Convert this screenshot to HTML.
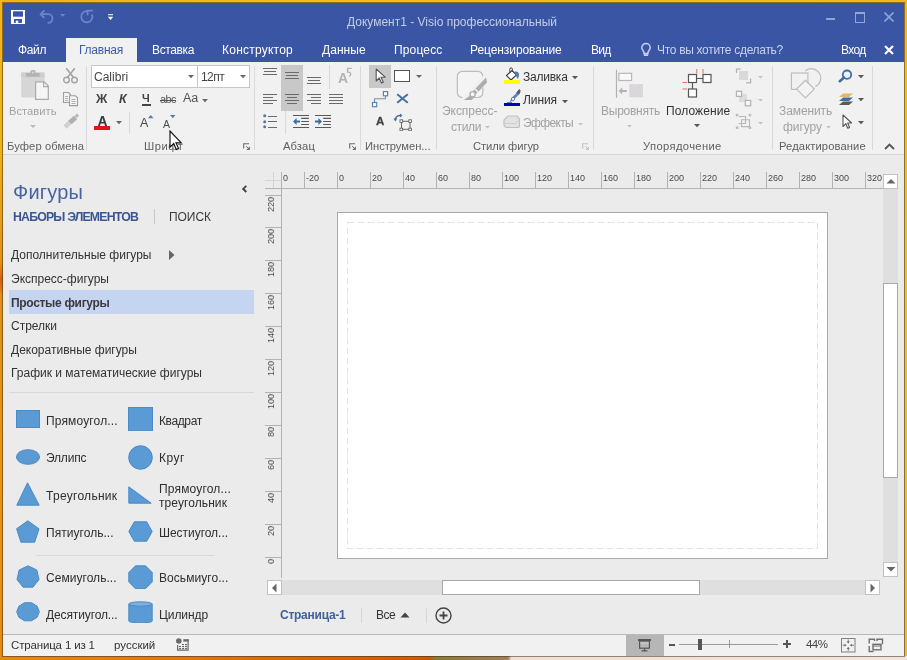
<!DOCTYPE html>
<html><head><meta charset="utf-8"><style>
html,body{margin:0;padding:0;width:907px;height:660px;overflow:hidden;background:#e9e9e9}
body{position:relative;font-family:"Liberation Sans",sans-serif}
svg{display:block}
.t{will-change:transform}
</style></head><body>
<div style="position:absolute;left:0;top:0;width:907px;height:660px;background:#eda52a"></div>
<div style="position:absolute;left:0;top:0;width:907px;height:3px;background:linear-gradient(90deg,#f3b020,#f5b818 30%,#f2bc1a 80%,#eeb820)"></div>
<div style="position:absolute;left:0;top:0;width:3px;height:656px;background:linear-gradient(180deg,#f4b420 0%,#f0b018 23%,#e39018 40%,#d86010 42.5%,#d86a12 43.5%,#e09018 45%,#e89412 70%,#e58c12 100%)"></div>
<div style="position:absolute;left:904px;top:0;width:3px;height:656px;background:linear-gradient(180deg,#f0b820,#e8c038 40%,#e6bc40 100%)"></div>
<div style="position:absolute;left:0;top:656px;width:907px;height:4px;background:linear-gradient(90deg,#e28a12 0%,#dc7810 22%,#d06808 36%,#c95e0a 46%,#c45a08 47.3%,#8c7a32 48%,#9a7c4c 52%,#a08058 56%,#f0dfd2 56.4%,#f1e3da 100%)"></div>
<div style="position:absolute;left:2px;top:2px;width:903px;height:655px;border:1px solid rgba(50,40,25,0.5);box-sizing:border-box"></div>
<div style="position:absolute;left:3px;top:3px;width:901px;height:59px;background:#3955a3;"></div>
<div style="position:absolute;left:3px;top:3px;width:901px;height:1px;background:#3d5590;"></div>
<div style="position:absolute;left:3px;top:62px;width:901px;height:92px;background:#f1f1f1;"></div>
<div style="position:absolute;left:3px;top:154px;width:901px;height:1px;background:#d6d6d6;"></div>
<div style="position:absolute;left:3px;top:155px;width:901px;height:479px;background:#ebebeb;"></div>
<div style="position:absolute;left:3px;top:634px;width:901px;height:1px;background:#b9b9b9;"></div>
<div style="position:absolute;left:3px;top:635px;width:901px;height:21px;background:#f1f1f1;"></div>
<div style="position:absolute;left:66px;top:38px;width:71px;height:24px;background:#f1f1f1;"></div>
<div style="position:absolute;left:154px;top:209px;width:1px;height:15px;background:#c8c8c8;"></div>
<div style="position:absolute;left:9px;top:290px;width:245px;height:24px;background:#c5d4f1;"></div>
<div style="position:absolute;left:9px;top:392px;width:245px;height:1px;background:#d8d8d8;"></div>
<div style="position:absolute;left:36px;top:555px;width:178px;height:1px;background:#d8d8d8;"></div>
<div style="position:absolute;left:337px;top:212px;width:491px;height:347px;background:#ffffff;border:1px solid #a9a9a9;box-sizing:border-box"></div>
<svg style="position:absolute;left:347px;top:222px;" width="471" height="327" viewBox="0 0 471 327"><rect x="0.5" y="0.5" width="470" height="326" fill="none" stroke="#e2e2e2" stroke-width="1" stroke-dasharray="7 3"/></svg>
<div style="position:absolute;left:626px;top:635px;width:38px;height:21px;background:#b6b6b6;"></div>
<svg style="position:absolute;left:11px;top:10px;" width="14" height="14" viewBox="0 0 14 14"><rect x="0" y="0" width="14" height="14" fill="#fff"/><rect x="2" y="1.3" width="10" height="5.4" fill="#3955a3"/><rect x="3" y="9" width="8" height="3.9" fill="#3955a3"/><rect x="4.8" y="10.6" width="2.4" height="2.3" fill="#fff"/></svg>
<svg style="position:absolute;left:38px;top:8px;" width="18" height="17" viewBox="0 0 18 17"><path d="M2.6 6.2H10.2A4.3 4.3 0 0 1 10.2 14.8H9.6" fill="none" stroke="#6d85c9" stroke-width="1.8"/><path d="M6.4 2.4L2.6 6.2 6.4 10" fill="none" stroke="#6d85c9" stroke-width="1.8"/></svg>
<svg style="position:absolute;left:60px;top:14px;" width="6" height="3" viewBox="0 0 6 3"><path d="M0 0h5.3l-2.65 2.8z" fill="#6d85c9"/></svg>
<svg style="position:absolute;left:79px;top:9px;" width="15" height="15" viewBox="0 0 15 15"><path d="M8.6 2.2A5.6 5.6 0 1 0 12.9 5.4" fill="none" stroke="#6d85c9" stroke-width="1.8"/><path d="M8.6 6.5V1.6h5.1" fill="none" stroke="#6d85c9" stroke-width="1.6"/></svg>
<svg style="position:absolute;left:107px;top:13px;" width="7" height="8" viewBox="0 0 7 8"><rect x="1" y="1.2" width="5" height="1" fill="#fff"/><path d="M0.8 3.8h5.4l-2.7 3.3z" fill="#fff"/></svg>
<div style="position:absolute;left:826px;top:18px;width:9px;height:1.6px;background:#8fa2d6;"></div>
<div style="position:absolute;left:855px;top:12px;width:8px;height:8px;border:1px solid #93a5d8;border-top-width:2px"></div>
<svg style="position:absolute;left:884px;top:12px;" width="10" height="10" viewBox="0 0 10 10"><path d="M0.5 0.5l9 9M9.5 0.5l-9 9" stroke="#8fa2d6" stroke-width="1.6"/></svg>
<svg style="position:absolute;left:640px;top:41.5px;" width="12" height="15" viewBox="0 0 12 15"><path d="M6 1.5a4.2 4.2 0 0 0-4.2 4.2c0 1.9 1.6 3.1 2.2 4.7v1.2h4V10.4c.6-1.6 2.2-2.8 2.2-4.7A4.2 4.2 0 0 0 6 1.5z" fill="none" stroke="#c8d1ee" stroke-width="1.5"/><rect x="3.8" y="12.2" width="4.4" height="1.8" fill="#c8d1ee"/></svg>
<svg style="position:absolute;left:884px;top:45px;" width="10" height="10" viewBox="0 0 10 10"><path d="M1 1l8 8M9 1l-8 8" stroke="#fff" stroke-width="2.2"/></svg>
<div style="position:absolute;left:86px;top:66px;width:1px;height:84px;background:#d9d9d9;"></div>
<div style="position:absolute;left:254px;top:66px;width:1px;height:84px;background:#d9d9d9;"></div>
<div style="position:absolute;left:360px;top:66px;width:1px;height:84px;background:#d9d9d9;"></div>
<div style="position:absolute;left:436px;top:66px;width:1px;height:84px;background:#d9d9d9;"></div>
<div style="position:absolute;left:593px;top:66px;width:1px;height:84px;background:#d9d9d9;"></div>
<div style="position:absolute;left:772px;top:66px;width:1px;height:84px;background:#d9d9d9;"></div>
<div style="position:absolute;left:872px;top:66px;width:1px;height:84px;background:#d9d9d9;"></div>
<div style="position:absolute;left:129px;top:112px;width:1px;height:22px;background:#d9d9d9;"></div>
<div style="position:absolute;left:329px;top:65px;width:1px;height:24px;background:#d9d9d9;"></div>
<div style="position:absolute;left:285px;top:110px;width:1px;height:24px;background:#d9d9d9;"></div>
<svg style="position:absolute;left:243px;top:143px;" width="8" height="8" viewBox="0 0 8 8"><path d="M0.7 5.6V0.7H6" fill="none" stroke="#6a6a6a" stroke-width="1.1"/><path d="M3.2 3.2l2.6 2.6" stroke="#6a6a6a" stroke-width="1"/><path d="M3.3 6.9H6.9V3.3Z" fill="#6a6a6a"/></svg>
<svg style="position:absolute;left:349px;top:143px;" width="8" height="8" viewBox="0 0 8 8"><path d="M0.7 5.6V0.7H6" fill="none" stroke="#6a6a6a" stroke-width="1.1"/><path d="M3.2 3.2l2.6 2.6" stroke="#6a6a6a" stroke-width="1"/><path d="M3.3 6.9H6.9V3.3Z" fill="#6a6a6a"/></svg>
<svg style="position:absolute;left:581.5px;top:143px;" width="8" height="8" viewBox="0 0 8 8"><path d="M0.7 5.6V0.7H6" fill="none" stroke="#c2c2c2" stroke-width="1.1"/><path d="M3.2 3.2l2.6 2.6" stroke="#c2c2c2" stroke-width="1"/><path d="M3.3 6.9H6.9V3.3Z" fill="#c2c2c2"/></svg>
<svg style="position:absolute;left:884px;top:143px;" width="11" height="7" viewBox="0 0 11 7"><path d="M1 6l4.5-4.5L10 6" fill="none" stroke="#555" stroke-width="1.8"/></svg>
<svg style="position:absolute;left:20px;top:68px;" width="30" height="33" viewBox="0 0 30 33"><rect x="1.2" y="4.5" width="23.3" height="25" fill="#d6d6d6"/><rect x="1.2" y="4.5" width="23.3" height="5" fill="#cfcfcf"/><rect x="6" y="5" width="13.6" height="3.7" fill="#b3b3b3"/><rect x="10.5" y="2" width="5" height="4" rx="1.5" fill="#b3b3b3"/><circle cx="13" cy="4.5" r="0.9" fill="#e0e0e0"/><path d="M15.6 13.8h8.5l4.2 4.2v13.4H15.6z" fill="#f5f5f5" stroke="#aaaaaa" stroke-width="1.2"/><path d="M23.6 13.8v4.8h4.7" fill="none" stroke="#aaaaaa" stroke-width="1.1"/></svg>
<svg style="position:absolute;left:30px;top:125px;" width="7" height="4" viewBox="0 0 7 4"><path d="M0 0h6l-3 3z" fill="#b8b8b8"/></svg>
<svg style="position:absolute;left:62px;top:67px;" width="17" height="18" viewBox="0 0 17 18"><circle cx="4.5" cy="13" r="2.8" fill="none" stroke="#a3a3a3" stroke-width="1.4"/><circle cx="12.5" cy="13" r="2.8" fill="none" stroke="#a3a3a3" stroke-width="1.4"/><path d="M5.6 10.3L12.8 1.2M11.4 10.3L4.2 1.2" stroke="#a3a3a3" stroke-width="1.6"/></svg>
<svg style="position:absolute;left:62px;top:91px;" width="17" height="16" viewBox="0 0 17 16"><path d="M1.5 1.5h5l2 2v8h-7z" fill="#f3f3f3" stroke="#9e9e9e" stroke-width="1.1"/><path d="M7.5 4.8h6l2 2v7.8h-8z" fill="#f3f3f3" stroke="#9e9e9e" stroke-width="1.1"/><path d="M3 5.5h3M3 7.5h3M3 9.5h3M9.5 8.5h4M9.5 10.5h4M9.5 12.5h4" stroke="#a8a8a8" stroke-width="0.9"/></svg>
<svg style="position:absolute;left:62px;top:113px;" width="18" height="16" viewBox="0 0 18 16"><path d="M3 14l6.5-6" stroke="#d0d0d0" stroke-width="4.5"/><path d="M8 9.5l5.5-5" stroke="#b0b0b0" stroke-width="5"/><path d="M13.5 4l2.5-2.3" stroke="#b8b8b8" stroke-width="3"/></svg>
<div style="position:absolute;left:91px;top:65px;border:1px solid #c6c6c6;background:#fff;box-sizing:border-box;width:108px;height:23px"></div>
<div style="position:absolute;left:197px;top:65px;width:53px;height:23px;border:1px solid #c6c6c6;background:#fff;box-sizing:border-box"></div>
<svg style="position:absolute;left:187.8px;top:75px;" width="7" height="4" viewBox="0 0 7 4"><path d="M0 0h6l-3 3.2z" fill="#666"/></svg>
<svg style="position:absolute;left:239.8px;top:75px;" width="7" height="4" viewBox="0 0 7 4"><path d="M0 0h6l-3 3.2z" fill="#666"/></svg>
<div style="position:absolute;left:141.5px;top:104px;width:9px;height:1.5px;background:#444;"></div>
<div style="position:absolute;left:159.5px;top:99.5px;width:16.5px;height:1.2px;background:#555;"></div>
<svg style="position:absolute;left:201.5px;top:98.5px;" width="7" height="4" viewBox="0 0 7 4"><path d="M0 0h6l-3 3.2z" fill="#666"/></svg>
<svg style="position:absolute;left:97px;top:115px;" width="11" height="12" viewBox="0 0 11 12"><path fill-rule="evenodd" d="M0.9 11L4.3 0.9h2.4L10.1 11H8.1L7.3 8.6H3.7L2.9 11zM4.3 6.9h2.4L5.5 3.1z" fill="#3c3c3c"/></svg>
<div style="position:absolute;left:94px;top:126px;width:16px;height:3.8px;background:#e8101a;"></div>
<svg style="position:absolute;left:115.5px;top:121px;" width="7" height="4" viewBox="0 0 7 4"><path d="M0 0h6l-3 3.2z" fill="#666"/></svg>
<svg style="position:absolute;left:148px;top:114.5px;" width="6" height="4" viewBox="0 0 6 4"><path d="M0 3.2h5.5L2.75 0z" fill="#4f7eb8"/></svg>
<svg style="position:absolute;left:170.3px;top:114.8px;" width="6" height="4" viewBox="0 0 6 4"><path d="M0 0h5.5l-2.75 3.2z" fill="#4f7eb8"/></svg>
<div style="position:absolute;left:281px;top:65px;width:22px;height:46px;background:#c8c8c8;"></div>
<div style="position:absolute;left:263px;top:67.5px;width:14px;height:1.3px;background:#6a6a6a;"></div>
<div style="position:absolute;left:264px;top:70.5px;width:12px;height:1.3px;background:#6a6a6a;"></div>
<div style="position:absolute;left:263px;top:73.5px;width:14px;height:1.3px;background:#6a6a6a;"></div>
<div style="position:absolute;left:285px;top:71.5px;width:14px;height:1.3px;background:#6a6a6a;"></div>
<div style="position:absolute;left:286px;top:74.5px;width:12px;height:1.3px;background:#6a6a6a;"></div>
<div style="position:absolute;left:285px;top:77.5px;width:14px;height:1.3px;background:#6a6a6a;"></div>
<div style="position:absolute;left:307px;top:76.5px;width:14px;height:1.3px;background:#6a6a6a;"></div>
<div style="position:absolute;left:308px;top:79.5px;width:12px;height:1.3px;background:#6a6a6a;"></div>
<div style="position:absolute;left:307px;top:82.5px;width:14px;height:1.3px;background:#6a6a6a;"></div>
<svg style="position:absolute;left:344px;top:66px;" width="10" height="12" viewBox="0 0 10 12"><path d="M7.8 2.3H3.6V6.2C6.8 5.8 8 8.3 5.2 10.6" fill="none" stroke="#b3b3b3" stroke-width="1.3"/></svg>
<div style="position:absolute;left:263px;top:94px;width:14px;height:1.3px;background:#6a6a6a;"></div>
<div style="position:absolute;left:263px;top:97px;width:10px;height:1.3px;background:#6a6a6a;"></div>
<div style="position:absolute;left:263px;top:100px;width:14px;height:1.3px;background:#6a6a6a;"></div>
<div style="position:absolute;left:263px;top:103px;width:10px;height:1.3px;background:#6a6a6a;"></div>
<div style="position:absolute;left:285px;top:94px;width:14px;height:1.3px;background:#6a6a6a;"></div>
<div style="position:absolute;left:287px;top:97px;width:10px;height:1.3px;background:#6a6a6a;"></div>
<div style="position:absolute;left:285px;top:100px;width:14px;height:1.3px;background:#6a6a6a;"></div>
<div style="position:absolute;left:287px;top:103px;width:10px;height:1.3px;background:#6a6a6a;"></div>
<div style="position:absolute;left:307px;top:94px;width:14px;height:1.3px;background:#6a6a6a;"></div>
<div style="position:absolute;left:311px;top:97px;width:10px;height:1.3px;background:#6a6a6a;"></div>
<div style="position:absolute;left:307px;top:100px;width:14px;height:1.3px;background:#6a6a6a;"></div>
<div style="position:absolute;left:311px;top:103px;width:10px;height:1.3px;background:#6a6a6a;"></div>
<div style="position:absolute;left:329px;top:94px;width:14px;height:1.3px;background:#6a6a6a;"></div>
<div style="position:absolute;left:329px;top:97px;width:14px;height:1.3px;background:#6a6a6a;"></div>
<div style="position:absolute;left:329px;top:100px;width:14px;height:1.3px;background:#6a6a6a;"></div>
<div style="position:absolute;left:329px;top:103px;width:14px;height:1.3px;background:#6a6a6a;"></div>
<svg style="position:absolute;left:263px;top:114.3px;" width="4" height="4" viewBox="0 0 4 4"><circle cx="1.7" cy="1.7" r="1.5" fill="#5176a8"/></svg>
<div style="position:absolute;left:268px;top:115.5px;width:9px;height:1.3px;background:#6a6a6a;"></div>
<svg style="position:absolute;left:263px;top:119.8px;" width="4" height="4" viewBox="0 0 4 4"><circle cx="1.7" cy="1.7" r="1.5" fill="#5176a8"/></svg>
<div style="position:absolute;left:268px;top:121px;width:9px;height:1.3px;background:#6a6a6a;"></div>
<svg style="position:absolute;left:263px;top:125.3px;" width="4" height="4" viewBox="0 0 4 4"><circle cx="1.7" cy="1.7" r="1.5" fill="#5176a8"/></svg>
<div style="position:absolute;left:268px;top:126.5px;width:9px;height:1.3px;background:#6a6a6a;"></div>
<svg style="position:absolute;left:292px;top:113px;" width="18" height="16" viewBox="0 0 18 16"><path d="M1 2.5h16M9.2 5.4h7.7M9.2 8.5h7.7M9.2 11.5h7.7M1 14.5h16" stroke="#585858" stroke-width="1.1"/><path d="M1 8.5L4.6 5.1V7.4H8V9.6H4.6V11.9Z" fill="#3f6e9c"/></svg>
<svg style="position:absolute;left:314px;top:113px;" width="18" height="16" viewBox="0 0 18 16"><path d="M1 2.5h16M9.2 5.4h7.7M9.2 8.5h7.7M9.2 11.5h7.7M1 14.5h16" stroke="#585858" stroke-width="1.1"/><path d="M8 8.5L4.4 5.1V7.4H1V9.6H4.4V11.9Z" fill="#3f6e9c"/></svg>
<div style="position:absolute;left:369px;top:65px;width:22px;height:23px;background:#c8c8c8;"></div>
<svg style="position:absolute;left:375px;top:68px;" width="11" height="16" viewBox="0 0 11 16"><path d="M1.2 1v12l3-3 2.3 5 1.8-.8-2.3-5h4.2z" fill="#fff" stroke="#555" stroke-width="1.1" stroke-linejoin="round"/></svg>
<div style="position:absolute;left:394px;top:70px;width:16px;height:12px;border:1.3px solid #555;box-sizing:border-box;background:#fff"></div>
<svg style="position:absolute;left:415.5px;top:75px;" width="7" height="4" viewBox="0 0 7 4"><path d="M0 0h6l-3 3z" fill="#666"/></svg>
<svg style="position:absolute;left:371px;top:90px;" width="18" height="18" viewBox="0 0 18 18"><path d="M3.5 12.5V8.8H14.5V5.6" fill="none" stroke="#7d8fa6" stroke-width="1.1"/><rect x="1.5" y="12.5" width="4.2" height="4.2" fill="#fff" stroke="#5b84b4" stroke-width="1.2"/><rect x="12.4" y="1.6" width="4.2" height="4.2" fill="#fff" stroke="#5b84b4" stroke-width="1.2"/></svg>
<svg style="position:absolute;left:396px;top:93px;" width="13" height="11" viewBox="0 0 13 11"><path d="M1.2 1.2l10.6 8.6M11.8 1.2L1.2 9.8" stroke="#4570a0" stroke-width="2"/></svg>
<svg style="position:absolute;left:393px;top:113px;" width="19" height="18" viewBox="0 0 19 18"><rect x="8.5" y="8.3" width="8.5" height="8" fill="none" stroke="#666" stroke-width="1"/><g fill="#fff" stroke="#666" stroke-width="0.9"><rect x="7" y="6.8" width="2.6" height="2.6"/><rect x="15.8" y="6.8" width="2.6" height="2.6"/><rect x="7" y="15.2" width="2.6" height="2.6"/><rect x="15.8" y="15.2" width="2.6" height="2.6"/></g><path d="M2.3 6.5C2.8 3.8 5 2.4 7.8 2.6" fill="none" stroke="#4570a0" stroke-width="1.4"/><path d="M7 0.6L9.6 2.6 7 4.6zM0.4 5.6L2.3 8.6 4.3 5.6z" fill="#4570a0"/></svg>
<svg style="position:absolute;left:455px;top:69px;" width="34" height="33" viewBox="0 0 34 33"><rect x="2.3" y="2.3" width="25.5" height="26.2" rx="5" fill="#f4f4f4" stroke="#bcbcbc" stroke-width="1.2"/><path d="M31.5 9L10 31" stroke="#f1f1f1" stroke-width="8"/><path d="M31 8.5L32 13.5 23.5 22.5 20.5 19.5Z" fill="#adadad"/><path d="M19.5 20.5L22.5 23.5 20.5 25.5 17.5 22.5Z" fill="#adadad"/><circle cx="17.6" cy="25.2" r="2.6" fill="#f6f6f6" stroke="#adadad" stroke-width="1.3"/><path d="M14.8 26.8L19.6 28.6 16.5 31 8.8 31Z" fill="#adadad"/></svg>
<svg style="position:absolute;left:485px;top:126px;" width="6" height="4" viewBox="0 0 6 4"><path d="M0 0h5l-2.5 2.6z" fill="#c2c2c2"/></svg>
<svg style="position:absolute;left:503px;top:66px;" width="18" height="15" viewBox="0 0 18 15"><path d="M3.5 9.5L9 4.5 13.5 9 8 14Z" fill="#fff" stroke="#3a3a3a" stroke-width="1.1"/><path d="M6.8 6.5V3.2A1.3 1.3 0 0 1 9.4 3.2V6" fill="none" stroke="#3a3a3a" stroke-width="0.9"/><path d="M11.5 5.5C14 5 16 6 16 8.5 16 10.5 15.2 12 14.5 13 13.8 11.5 13.2 10 12.5 8.8Z" fill="#4f7eb0"/></svg>
<div style="position:absolute;left:503.6px;top:80px;width:16px;height:3.5px;background:#ffff00;"></div>
<svg style="position:absolute;left:571.5px;top:75.5px;" width="7" height="4" viewBox="0 0 7 4"><path d="M0 0h6l-3 3.2z" fill="#555"/></svg>
<svg style="position:absolute;left:503px;top:88px;" width="18" height="15" viewBox="0 0 18 15"><path d="M6.5 14.5L8.5 10 14.5 4 16.5 6 10.5 12Z" fill="#5a86c0"/><path d="M14 4.5L16.5 1.5 17.5 3.8 16.5 6Z" fill="#606060"/><path d="M13 5L16.2 1 17.6 2.5 16 6.2" fill="#5e5e5e"/><circle cx="10" cy="11" r="1.6" fill="#fff" stroke="#3f6e9c" stroke-width="0.8"/><path d="M4 14.5H9" stroke="#5a86c0" stroke-width="1"/></svg>
<div style="position:absolute;left:503.6px;top:102.7px;width:16px;height:3.6px;background:#0000c8;"></div>
<svg style="position:absolute;left:561.5px;top:99.5px;" width="7" height="4" viewBox="0 0 7 4"><path d="M0 0h6l-3 3.2z" fill="#555"/></svg>
<svg style="position:absolute;left:503px;top:115px;" width="17" height="13" viewBox="0 0 17 13"><path d="M5 1h9l2.5 3v6.5a2 2 0 0 1-2 2H4a3 3 0 0 1-3-3V5z" fill="#e3e3e3" stroke="#c0c0c0" stroke-width="1.2"/><path d="M1.5 8.5h11l3-3" fill="none" stroke="#cfcfcf"/></svg>
<svg style="position:absolute;left:577.5px;top:122.5px;" width="6" height="4" viewBox="0 0 6 4"><path d="M0 0h5l-2.5 2.6z" fill="#c2c2c2"/></svg>
<svg style="position:absolute;left:614px;top:68px;" width="32" height="32" viewBox="0 0 32 32"><path d="M2.5 1.7v28.2" stroke="#b2b2b2" stroke-width="1.2"/><rect x="4.8" y="5.3" width="12.8" height="7.2" fill="#f8f8f8" stroke="#b8b8b8" stroke-width="1.2"/><rect x="15.3" y="16.1" width="13.6" height="13.2" fill="#d9d7d9"/><path d="M4.6 23L8.2 19.6V22H12.8V24H8.2V26.4Z" fill="#b4b4b4"/></svg>
<svg style="position:absolute;left:627px;top:125px;" width="6" height="4" viewBox="0 0 6 4"><path d="M0 0h5l-2.5 2.6z" fill="#c2c2c2"/></svg>
<svg style="position:absolute;left:681px;top:68px;" width="33" height="31" viewBox="0 0 33 31"><g fill="#fff" stroke="#555" stroke-width="1.2"><rect x="7.5" y="6.5" width="8" height="8"/><rect x="22" y="6.5" width="8" height="8"/><rect x="7.5" y="21" width="8" height="8"/></g><path d="M15.5 10.5h6.5M11.5 14.5V21" stroke="#555" stroke-width="1.2"/><path d="M15.8 1v4.5M22 1v4.5M1.5 14.5h4.5M1.5 21h4.5" stroke="#e07060" stroke-width="1"/></svg>
<svg style="position:absolute;left:694px;top:124px;" width="7" height="4" viewBox="0 0 7 4"><path d="M0 0h6l-3 3.2z" fill="#555"/></svg>
<svg style="position:absolute;left:735px;top:68px;" width="17" height="16" viewBox="0 0 17 16"><rect x="4" y="3" width="9" height="9" fill="#d9d9d9"/><path d="M1.5 5V1.2H5.5M15.6 10.5v4.3h-4.5" fill="none" stroke="#b2b2b2" stroke-width="1.2"/></svg>
<svg style="position:absolute;left:735px;top:90px;" width="17" height="17" viewBox="0 0 17 17"><rect x="4" y="4" width="8" height="8" fill="#dcdcdc"/><rect x="1.4" y="1.2" width="5.2" height="5.2" fill="#f6f6f6" stroke="#b2b2b2" stroke-width="1.2"/><rect x="10.3" y="10.4" width="5.4" height="5.4" fill="#f6f6f6" stroke="#b2b2b2" stroke-width="1.2"/></svg>
<svg style="position:absolute;left:735px;top:113px;" width="17" height="17" viewBox="0 0 17 17"><g fill="#bdbdbd"><rect x="0.8" y="0.8" width="2.6" height="2.6"/><rect x="13.6" y="0.8" width="2.6" height="2.6"/><rect x="0.8" y="13.4" width="2.6" height="2.6"/><rect x="13.6" y="13.4" width="2.6" height="2.6"/></g><path d="M4 3.5h6.5v7H3.6M6.5 6.8h8v6.8H6.5z" fill="none" stroke="#b8b8b8" stroke-width="1.1"/></svg>
<svg style="position:absolute;left:758px;top:75.5px;" width="6" height="4" viewBox="0 0 6 4"><path d="M0 0h5l-2.5 2.6z" fill="#c2c2c2"/></svg>
<svg style="position:absolute;left:758px;top:98.5px;" width="6" height="4" viewBox="0 0 6 4"><path d="M0 0h5l-2.5 2.6z" fill="#c2c2c2"/></svg>
<svg style="position:absolute;left:758px;top:121.5px;" width="6" height="4" viewBox="0 0 6 4"><path d="M0 0h5l-2.5 2.6z" fill="#c2c2c2"/></svg>
<svg style="position:absolute;left:790px;top:68px;" width="32" height="32" viewBox="0 0 32 32"><rect x="1.4" y="5" width="16.5" height="16.4" fill="none" stroke="#bdbdbd" stroke-width="1.2"/><path d="M15.2 3A9.4 9.4 0 1 1 25.4 18.6" fill="none" stroke="#bdbdbd" stroke-width="1.2"/><path d="M15.4 12.3L24.3 21.1 15.4 30 6.6 21.1Z" fill="#f3f3f3" stroke="#bdbdbd" stroke-width="1.2"/></svg>
<svg style="position:absolute;left:826px;top:126px;" width="6" height="4" viewBox="0 0 6 4"><path d="M0 0h5l-2.5 2.6z" fill="#c2c2c2"/></svg>
<svg style="position:absolute;left:838px;top:69px;" width="16" height="14" viewBox="0 0 16 14"><circle cx="9" cy="5.7" r="4.2" fill="#eaf1f8" stroke="#3f6e9c" stroke-width="1.8"/><path d="M1.8 12.2l4.2-3.6" stroke="#3f6e9c" stroke-width="2.6" stroke-linecap="round"/></svg>
<svg style="position:absolute;left:838px;top:92px;" width="16" height="15" viewBox="0 0 16 15"><path d="M1 5l4-3.5h10l-4 3.5z" fill="#e6b46a"/><path d="M1 9l4-3.5h10l-4 3.5z" fill="#41709e"/><path d="M1 13l4-3.5h10l-4 3.5z" fill="#5a5a5a"/></svg>
<svg style="position:absolute;left:842px;top:114px;" width="10" height="15" viewBox="0 0 10 15"><path d="M1 1v11.5l2.8-2.8 2 4.5 1.8-.8-2-4.4h4z" fill="#fff" stroke="#555" stroke-width="1.1" stroke-linejoin="round"/></svg>
<svg style="position:absolute;left:858px;top:75px;" width="7" height="4" viewBox="0 0 7 4"><path d="M0 0h6l-3 3.2z" fill="#555"/></svg>
<svg style="position:absolute;left:858px;top:98px;" width="7" height="4" viewBox="0 0 7 4"><path d="M0 0h6l-3 3.2z" fill="#555"/></svg>
<svg style="position:absolute;left:858px;top:121px;" width="7" height="4" viewBox="0 0 7 4"><path d="M0 0h6l-3 3.2z" fill="#555"/></svg>
<svg style="position:absolute;left:241px;top:184px;" width="7" height="9" viewBox="0 0 7 9"><path d="M5.3 1.8L2.2 4.9 5.3 8" fill="none" stroke="#444" stroke-width="1.9"/></svg>
<svg style="position:absolute;left:169px;top:249.6px;" width="6" height="10" viewBox="0 0 6 10"><path d="M0 0v10l5.5-5z" fill="#666"/></svg>
<svg style="position:absolute;left:16px;top:410px;" width="24" height="18" viewBox="0 0 24 18"><rect x="0.5" y="0.5" width="23" height="17" fill="#5b9bd5" stroke="#4a8ac6"/></svg>
<svg style="position:absolute;left:128px;top:407px;" width="25" height="24" viewBox="0 0 25 24"><rect x="0.5" y="0.5" width="24" height="23.5" fill="#5b9bd5" stroke="#4a8ac6"/></svg>
<svg style="position:absolute;left:16px;top:449px;" width="24" height="16" viewBox="0 0 24 16"><ellipse cx="12" cy="8" rx="11.5" ry="7.3" fill="#5b9bd5" stroke="#4a8ac6"/></svg>
<svg style="position:absolute;left:128px;top:445px;" width="25" height="25" viewBox="0 0 25 25"><circle cx="12.5" cy="12.5" r="11.8" fill="#5b9bd5" stroke="#4a8ac6"/></svg>
<svg style="position:absolute;left:16px;top:482px;" width="24" height="24" viewBox="0 0 24 24"><path d="M11.5 0.8L23.2 23.2H0.8z" fill="#5b9bd5" stroke="#4a8ac6"/></svg>
<svg style="position:absolute;left:128px;top:486px;" width="24" height="18" viewBox="0 0 24 18"><path d="M0.8 0.8L23.2 17.2H0.8z" fill="#5b9bd5" stroke="#4a8ac6"/></svg>
<svg style="position:absolute;left:16px;top:520px;" width="24" height="23" viewBox="0 0 24 23"><path d="M11.8 0.8L23 8.8l-4.3 13.4H4.9L0.6 8.8z" fill="#5b9bd5" stroke="#4a8ac6"/></svg>
<svg style="position:absolute;left:128px;top:521px;" width="25" height="21" viewBox="0 0 25 21"><path d="M6.3 0.8h12.4L24.2 10.5l-5.5 9.7H6.3L0.8 10.5z" fill="#5b9bd5" stroke="#4a8ac6"/></svg>
<svg style="position:absolute;left:16px;top:565px;" width="24" height="24" viewBox="0 0 24 24"><path d="M12 0.8l8.8 4.2 2.2 9.5-6.1 7.7H7.1L1 14.5l2.2-9.5z" fill="#5b9bd5" stroke="#4a8ac6"/></svg>
<svg style="position:absolute;left:128px;top:565px;" width="25" height="24" viewBox="0 0 25 24"><path d="M7.5 0.8h10l6.7 6.7v9.5l-6.7 6.7h-10L0.8 17V7.5z" fill="#5b9bd5" stroke="#4a8ac6"/></svg>
<svg style="position:absolute;left:16px;top:602px;" width="24" height="20" viewBox="0 0 24 20"><path d="M23.30,9.75 L21.14,15.33 L15.49,18.79 L8.51,18.79 L2.86,15.33 L0.70,9.75 L2.86,4.17 L8.51,0.71 L15.49,0.71 L21.14,4.17z" fill="#5b9bd5" stroke="#4a8ac6"/></svg>
<svg style="position:absolute;left:128px;top:601px;" width="25" height="22" viewBox="0 0 25 22"><path d="M0.8 3v17c0 1.2 5.3 1.8 11.7 1.8s11.7-.6 11.7-1.8V3" fill="#5b9bd5" stroke="#4a8ac6"/><ellipse cx="12.5" cy="3" rx="11.7" ry="2.2" fill="#7fb0de" stroke="#4a8ac6"/></svg>
<div style="position:absolute;left:265px;top:188px;width:618px;height:1px;background:#b2b2b2;"></div>
<div style="position:absolute;left:281px;top:172px;width:1px;height:406px;background:#b2b2b2;"></div>
<div style="position:absolute;left:265px;top:180px;width:16px;height:1px;background:#d4d4d4;"></div>
<div style="position:absolute;left:273px;top:172px;width:1px;height:16px;background:#d4d4d4;"></div>
<div style="position:absolute;left:304px;top:172px;width:1px;height:16px;background:#b2b2b2;"></div>
<div style="position:absolute;left:337px;top:172px;width:1px;height:16px;background:#b2b2b2;"></div>
<div style="position:absolute;left:370px;top:172px;width:1px;height:16px;background:#b2b2b2;"></div>
<div style="position:absolute;left:403px;top:172px;width:1px;height:16px;background:#b2b2b2;"></div>
<div style="position:absolute;left:436px;top:172px;width:1px;height:16px;background:#b2b2b2;"></div>
<div style="position:absolute;left:469px;top:172px;width:1px;height:16px;background:#b2b2b2;"></div>
<div style="position:absolute;left:502px;top:172px;width:1px;height:16px;background:#b2b2b2;"></div>
<div style="position:absolute;left:535px;top:172px;width:1px;height:16px;background:#b2b2b2;"></div>
<div style="position:absolute;left:568px;top:172px;width:1px;height:16px;background:#b2b2b2;"></div>
<div style="position:absolute;left:601px;top:172px;width:1px;height:16px;background:#b2b2b2;"></div>
<div style="position:absolute;left:634px;top:172px;width:1px;height:16px;background:#b2b2b2;"></div>
<div style="position:absolute;left:667px;top:172px;width:1px;height:16px;background:#b2b2b2;"></div>
<div style="position:absolute;left:700px;top:172px;width:1px;height:16px;background:#b2b2b2;"></div>
<div style="position:absolute;left:733px;top:172px;width:1px;height:16px;background:#b2b2b2;"></div>
<div style="position:absolute;left:766px;top:172px;width:1px;height:16px;background:#b2b2b2;"></div>
<div style="position:absolute;left:799px;top:172px;width:1px;height:16px;background:#b2b2b2;"></div>
<div style="position:absolute;left:832px;top:172px;width:1px;height:16px;background:#b2b2b2;"></div>
<div style="position:absolute;left:865px;top:172px;width:1px;height:16px;background:#b2b2b2;"></div>
<div style="position:absolute;left:265px;top:195px;width:16px;height:1px;background:#b2b2b2;"></div>
<div class="t" style="position:absolute;left:266.8px;top:197px;height:16px;font-size:9px;line-height:9px;color:#4a4a4a;writing-mode:vertical-rl;transform:rotate(180deg);white-space:pre;text-align:right">220</div>
<div style="position:absolute;left:265px;top:227px;width:16px;height:1px;background:#b2b2b2;"></div>
<div class="t" style="position:absolute;left:266.8px;top:229px;height:16px;font-size:9px;line-height:9px;color:#4a4a4a;writing-mode:vertical-rl;transform:rotate(180deg);white-space:pre;text-align:right">200</div>
<div style="position:absolute;left:265px;top:260px;width:16px;height:1px;background:#b2b2b2;"></div>
<div class="t" style="position:absolute;left:266.8px;top:262px;height:16px;font-size:9px;line-height:9px;color:#4a4a4a;writing-mode:vertical-rl;transform:rotate(180deg);white-space:pre;text-align:right">180</div>
<div style="position:absolute;left:265px;top:293px;width:16px;height:1px;background:#b2b2b2;"></div>
<div class="t" style="position:absolute;left:266.8px;top:295px;height:16px;font-size:9px;line-height:9px;color:#4a4a4a;writing-mode:vertical-rl;transform:rotate(180deg);white-space:pre;text-align:right">160</div>
<div style="position:absolute;left:265px;top:326px;width:16px;height:1px;background:#b2b2b2;"></div>
<div class="t" style="position:absolute;left:266.8px;top:328px;height:16px;font-size:9px;line-height:9px;color:#4a4a4a;writing-mode:vertical-rl;transform:rotate(180deg);white-space:pre;text-align:right">140</div>
<div style="position:absolute;left:265px;top:359px;width:16px;height:1px;background:#b2b2b2;"></div>
<div class="t" style="position:absolute;left:266.8px;top:361px;height:16px;font-size:9px;line-height:9px;color:#4a4a4a;writing-mode:vertical-rl;transform:rotate(180deg);white-space:pre;text-align:right">120</div>
<div style="position:absolute;left:265px;top:392px;width:16px;height:1px;background:#b2b2b2;"></div>
<div class="t" style="position:absolute;left:266.8px;top:394px;height:16px;font-size:9px;line-height:9px;color:#4a4a4a;writing-mode:vertical-rl;transform:rotate(180deg);white-space:pre;text-align:right">100</div>
<div style="position:absolute;left:265px;top:425px;width:16px;height:1px;background:#b2b2b2;"></div>
<div class="t" style="position:absolute;left:266.8px;top:427px;height:16px;font-size:9px;line-height:9px;color:#4a4a4a;writing-mode:vertical-rl;transform:rotate(180deg);white-space:pre;text-align:right">80</div>
<div style="position:absolute;left:265px;top:458px;width:16px;height:1px;background:#b2b2b2;"></div>
<div class="t" style="position:absolute;left:266.8px;top:460px;height:16px;font-size:9px;line-height:9px;color:#4a4a4a;writing-mode:vertical-rl;transform:rotate(180deg);white-space:pre;text-align:right">60</div>
<div style="position:absolute;left:265px;top:491px;width:16px;height:1px;background:#b2b2b2;"></div>
<div class="t" style="position:absolute;left:266.8px;top:493px;height:16px;font-size:9px;line-height:9px;color:#4a4a4a;writing-mode:vertical-rl;transform:rotate(180deg);white-space:pre;text-align:right">40</div>
<div style="position:absolute;left:265px;top:524px;width:16px;height:1px;background:#b2b2b2;"></div>
<div class="t" style="position:absolute;left:266.8px;top:526px;height:16px;font-size:9px;line-height:9px;color:#4a4a4a;writing-mode:vertical-rl;transform:rotate(180deg);white-space:pre;text-align:right">20</div>
<div style="position:absolute;left:265px;top:557px;width:16px;height:1px;background:#b2b2b2;"></div>
<div class="t" style="position:absolute;left:266.8px;top:559px;height:16px;font-size:9px;line-height:9px;color:#4a4a4a;writing-mode:vertical-rl;transform:rotate(180deg);white-space:pre;text-align:right">0</div>
<div style="position:absolute;left:883px;top:175px;width:15px;height:402px;background:#dfdfdf;"></div>
<div style="position:absolute;left:883px;top:174px;width:15px;height:15px;background:#fff;border:1px solid #c2c2c2;box-sizing:border-box"></div>
<svg style="position:absolute;left:885.5px;top:178px;" width="10" height="7" viewBox="0 0 10 7"><path d="M0.5 5.5L5 1l4.5 4.5z" fill="#666"/></svg>
<div style="position:absolute;left:883px;top:283px;width:15px;height:195px;background:#fff;border:1px solid #a9a9a9;box-sizing:border-box"></div>
<div style="position:absolute;left:883px;top:562px;width:15px;height:15px;background:#fff;border:1px solid #c2c2c2;box-sizing:border-box"></div>
<svg style="position:absolute;left:885.5px;top:566px;" width="10" height="7" viewBox="0 0 10 7"><path d="M0.5 1L5 5.5 9.5 1z" fill="#666"/></svg>
<div style="position:absolute;left:267px;top:580px;width:613px;height:15px;background:#dfdfdf;"></div>
<div style="position:absolute;left:267px;top:580px;width:15px;height:15px;background:#fff;border:1px solid #c2c2c2;box-sizing:border-box"></div>
<svg style="position:absolute;left:271px;top:583px;" width="7" height="10" viewBox="0 0 7 10"><path d="M5.5 0.5L1 5l4.5 4.5z" fill="#666"/></svg>
<div style="position:absolute;left:442px;top:580px;width:258px;height:15px;background:#fff;border:1px solid #a9a9a9;box-sizing:border-box"></div>
<div style="position:absolute;left:865px;top:580px;width:15px;height:15px;background:#fff;border:1px solid #c2c2c2;box-sizing:border-box"></div>
<svg style="position:absolute;left:869px;top:583px;" width="7" height="10" viewBox="0 0 7 10"><path d="M1.5 0.5L6 5 1.5 9.5z" fill="#666"/></svg>
<div style="position:absolute;left:361px;top:608px;width:1px;height:15px;background:#d6d6d6;"></div>
<svg style="position:absolute;left:400px;top:612px;" width="10" height="6" viewBox="0 0 10 6"><path d="M0.5 5.5L5 0.5l4.5 5z" fill="#444"/></svg>
<div style="position:absolute;left:426px;top:608px;width:1px;height:15px;background:#d6d6d6;"></div>
<svg style="position:absolute;left:435px;top:607px;" width="18" height="17" viewBox="0 0 18 17"><circle cx="8.5" cy="8.5" r="7.5" fill="none" stroke="#444" stroke-width="1.4"/><path d="M8.5 4.5v8M4.5 8.5h8" stroke="#444" stroke-width="1.8"/></svg>
<svg style="position:absolute;left:170px;top:634px;" width="22" height="20" viewBox="0 0 22 20"><circle cx="8.8" cy="7" r="2.8" fill="#6a6a6a"/><rect x="13.3" y="5.2" width="5.4" height="2.4" fill="#6a6a6a"/><path d="M7.6 11V16.1H18.1V5.2" fill="none" stroke="#6a6a6a" stroke-width="1.2"/><g fill="#6a6a6a"><rect x="12" y="10" width="2" height="1.1"/><rect x="15" y="10" width="2" height="1.1"/><rect x="9" y="12" width="2" height="1.1"/><rect x="12" y="12" width="2" height="1.1"/><rect x="15" y="12" width="2" height="1.1"/><rect x="9" y="14" width="2" height="1.1"/><rect x="12" y="14" width="2" height="1.1"/><rect x="15" y="14" width="2" height="1.1"/></g></svg>
<svg style="position:absolute;left:637px;top:638px;" width="15" height="14" viewBox="0 0 15 14"><rect x="1" y="1" width="13" height="2" fill="#555"/><rect x="2.6" y="3" width="9.8" height="7.2" fill="none" stroke="#555" stroke-width="1.2"/><rect x="3.5" y="4.6" width="8" height="1" fill="#d0d0d0"/><path d="M7.5 10.2v2.3M4.5 12.8h6" stroke="#555" stroke-width="1.2"/></svg>
<div style="position:absolute;left:669px;top:644px;width:6px;height:2px;background:#555;"></div>
<div style="position:absolute;left:679px;top:644.3px;width:99px;height:1px;background:#9a9a9a;"></div>
<div style="position:absolute;left:729px;top:640px;width:1px;height:8px;background:#9a9a9a;"></div>
<div style="position:absolute;left:698px;top:639px;width:4px;height:11px;background:#555;"></div>
<div style="position:absolute;left:783px;top:643.3px;width:8px;height:1.8px;background:#555;"></div>
<div style="position:absolute;left:786.1px;top:640.2px;width:1.8px;height:8px;background:#555;"></div>
<svg style="position:absolute;left:841px;top:638px;" width="15" height="15" viewBox="0 0 15 15"><rect x="0.5" y="0.5" width="13.5" height="13.5" fill="none" stroke="#808080" stroke-width="1"/><path d="M7.25 1.5v3.5M7.25 13v-3.5M1.5 7.25h3.5M13 7.25h-3.5" stroke="#777" stroke-width="0.9"/><path d="M5.7 3.6h3.1L7.25 5.4zM5.7 10.9h3.1L7.25 9.1zM3.6 5.7v3.1L5.4 7.25zM10.9 5.7v3.1L9.1 7.25z" fill="#666"/></svg>
<svg style="position:absolute;left:868px;top:638px;" width="16" height="15" viewBox="0 0 16 15"><path d="M1.2 5.5V1.2H6.5V3M9 3V1.2h5.5v5M1.2 8v5.5H5.5" fill="none" stroke="#707070" stroke-width="1.4"/><rect x="5" y="6.3" width="8" height="5.5" fill="none" stroke="#707070" stroke-width="1.4"/><path d="M5 8h8" stroke="#707070" stroke-width="1"/></svg>
<svg style="position:absolute;left:168.5px;top:129.5px;z-index:10" width="14" height="21" viewBox="0 0 14 21"><path d="M1 1V17.2L4.7 13.6 7.3 19.6 9.6 18.6 7 12.8H12.3Z" fill="#fff" stroke="#111" stroke-width="1.15" stroke-linejoin="miter"/></svg>
<div class="t" style="position:absolute;left:347.00px;top:16.14px;font-size:12px;line-height:12px;font-weight:400;color:#c3cdea;letter-spacing:0.000px;white-space:pre;">Документ1 - Visio профессиональный</div>
<div class="t" style="position:absolute;left:18.30px;top:44.14px;font-size:12px;line-height:12px;font-weight:400;color:#ffffff;letter-spacing:-0.354px;white-space:pre;">Файл</div>
<div class="t" style="position:absolute;left:79.00px;top:44.14px;font-size:12px;line-height:12px;font-weight:400;color:#3b5aa8;letter-spacing:-0.241px;white-space:pre;">Главная</div>
<div class="t" style="position:absolute;left:152.00px;top:44.14px;font-size:12px;line-height:12px;font-weight:400;color:#ffffff;letter-spacing:-0.373px;white-space:pre;">Вставка</div>
<div class="t" style="position:absolute;left:222.30px;top:44.14px;font-size:12px;line-height:12px;font-weight:400;color:#ffffff;letter-spacing:0.234px;white-space:pre;">Конструктор</div>
<div class="t" style="position:absolute;left:321.50px;top:44.14px;font-size:12px;line-height:12px;font-weight:400;color:#ffffff;letter-spacing:0.057px;white-space:pre;">Данные</div>
<div class="t" style="position:absolute;left:393.50px;top:44.14px;font-size:12px;line-height:12px;font-weight:400;color:#ffffff;letter-spacing:0.158px;white-space:pre;">Процесс</div>
<div class="t" style="position:absolute;left:470.30px;top:44.14px;font-size:12px;line-height:12px;font-weight:400;color:#ffffff;letter-spacing:-0.069px;white-space:pre;">Рецензирование</div>
<div class="t" style="position:absolute;left:591.00px;top:44.14px;font-size:12px;line-height:12px;font-weight:400;color:#ffffff;letter-spacing:-0.673px;white-space:pre;">Вид</div>
<div class="t" style="position:absolute;left:656.90px;top:44.14px;font-size:12px;line-height:12px;font-weight:400;color:#c8d1ee;letter-spacing:-0.307px;white-space:pre;">Что вы хотите сделать?</div>
<div class="t" style="position:absolute;left:840.50px;top:43.64px;font-size:12px;line-height:12px;font-weight:400;color:#ffffff;letter-spacing:-0.664px;white-space:pre;">Вход</div>
<div class="t" style="position:absolute;left:6.80px;top:140.72px;font-size:11.2px;line-height:11.2px;font-weight:400;color:#606060;letter-spacing:0.097px;white-space:pre;">Буфер обмена</div>
<div class="t" style="position:absolute;left:143.70px;top:140.82px;font-size:11.2px;line-height:11.2px;font-weight:400;color:#606060;letter-spacing:0.498px;white-space:pre;">Шрифт</div>
<div class="t" style="position:absolute;left:283.30px;top:140.82px;font-size:11.2px;line-height:11.2px;font-weight:400;color:#606060;letter-spacing:0.122px;white-space:pre;">Абзац</div>
<div class="t" style="position:absolute;left:364.50px;top:140.82px;font-size:11.2px;line-height:11.2px;font-weight:400;color:#606060;letter-spacing:-0.035px;white-space:pre;">Инструмен...</div>
<div class="t" style="position:absolute;left:473.00px;top:140.82px;font-size:11.2px;line-height:11.2px;font-weight:400;color:#606060;letter-spacing:-0.051px;white-space:pre;">Стили фигур</div>
<div class="t" style="position:absolute;left:642.80px;top:140.82px;font-size:11.2px;line-height:11.2px;font-weight:400;color:#606060;letter-spacing:0.371px;white-space:pre;">Упорядочение</div>
<div class="t" style="position:absolute;left:778.50px;top:140.82px;font-size:11.2px;line-height:11.2px;font-weight:400;color:#606060;letter-spacing:0.112px;white-space:pre;">Редактирование</div>
<div class="t" style="position:absolute;left:12.70px;top:182.07px;font-size:20px;line-height:20px;font-weight:400;color:#4862a2;letter-spacing:0.208px;white-space:pre;">Фигуры</div>
<div class="t" style="position:absolute;left:13.00px;top:210.79px;font-size:12.3px;line-height:12.3px;font-weight:700;color:#3b5590;letter-spacing:-0.808px;white-space:pre;">НАБОРЫ ЭЛЕМЕНТОВ</div>
<div class="t" style="position:absolute;left:169.00px;top:210.84px;font-size:12px;line-height:12px;font-weight:400;color:#3a3a3a;letter-spacing:-0.050px;white-space:pre;">ПОИСК</div>
<div class="t" style="position:absolute;left:11.00px;top:249.34px;font-size:12px;line-height:12px;font-weight:400;color:#333;letter-spacing:0.000px;white-space:pre;">Дополнительные фигуры</div>
<div class="t" style="position:absolute;left:11.00px;top:272.94px;font-size:12px;line-height:12px;font-weight:400;color:#333;letter-spacing:0.000px;white-space:pre;">Экспресс-фигуры</div>
<div class="t" style="position:absolute;left:11.00px;top:296.54px;font-size:12px;line-height:12px;font-weight:700;color:#3a3a3a;letter-spacing:-0.315px;white-space:pre;">Простые фигуры</div>
<div class="t" style="position:absolute;left:11.00px;top:320.14px;font-size:12px;line-height:12px;font-weight:400;color:#333;letter-spacing:0.000px;white-space:pre;">Стрелки</div>
<div class="t" style="position:absolute;left:11.00px;top:343.74px;font-size:12px;line-height:12px;font-weight:400;color:#333;letter-spacing:0.000px;white-space:pre;">Декоративные фигуры</div>
<div class="t" style="position:absolute;left:11.00px;top:367.34px;font-size:12px;line-height:12px;font-weight:400;color:#333;letter-spacing:0.000px;white-space:pre;">График и математические фигуры</div>
<div class="t" style="position:absolute;left:10.50px;top:640.07px;font-size:11.5px;line-height:11.5px;font-weight:400;color:#333;letter-spacing:-0.160px;white-space:pre;">Страница 1 из 1</div>
<div class="t" style="position:absolute;left:114.40px;top:640.07px;font-size:11.5px;line-height:11.5px;font-weight:400;color:#333;letter-spacing:0.003px;white-space:pre;">русский</div>
<div class="t" style="position:absolute;left:806.00px;top:639.27px;font-size:11.5px;line-height:11.5px;font-weight:400;color:#444;letter-spacing:-0.577px;white-space:pre;">44%</div>
<div class="t" style="position:absolute;left:9.40px;top:105.72px;font-size:11.2px;line-height:11.2px;font-weight:400;color:#a2a2a2;letter-spacing:0.022px;white-space:pre;">Вставить</div>
<div class="t" style="position:absolute;left:94.40px;top:70.54px;font-size:12px;line-height:12px;font-weight:400;color:#444;letter-spacing:0.012px;white-space:pre;">Calibri</div>
<div class="t" style="position:absolute;left:201.40px;top:70.84px;font-size:12px;line-height:12px;font-weight:400;color:#444;letter-spacing:-0.561px;white-space:pre;">12пт</div>
<div class="t" style="position:absolute;left:96.00px;top:92.92px;font-size:12.5px;line-height:12.5px;font-weight:700;color:#444;letter-spacing:1.088px;white-space:pre;">Ж</div>
<div class="t" style="position:absolute;left:118.50px;top:92.92px;font-size:12.5px;line-height:12.5px;font-weight:700;color:#444;letter-spacing:1.359px;white-space:pre;font-style:italic">К</div>
<div class="t" style="position:absolute;left:141.80px;top:93.29px;font-size:11px;line-height:11px;font-weight:700;color:#444;letter-spacing:0.566px;white-space:pre;">Ч</div>
<div class="t" style="position:absolute;left:160.00px;top:93.69px;font-size:11px;line-height:11px;font-weight:400;color:#555;letter-spacing:-0.583px;white-space:pre;">abc</div>
<div class="t" style="position:absolute;left:182.50px;top:92.32px;font-size:12.5px;line-height:12.5px;font-weight:400;color:#555;letter-spacing:-0.098px;white-space:pre;">Aa</div>
<div class="t" style="position:absolute;left:140.40px;top:117.02px;font-size:12.5px;line-height:12.5px;font-weight:400;color:#4a4a4a;letter-spacing:1.056px;white-space:pre;">A</div>
<div class="t" style="position:absolute;left:163.30px;top:118.71px;font-size:10.5px;line-height:10.5px;font-weight:400;color:#4a4a4a;letter-spacing:0.284px;white-space:pre;">A</div>
<div class="t" style="position:absolute;left:338.20px;top:70.95px;font-size:14px;line-height:14px;font-weight:700;color:#b3b3b3;letter-spacing:0.575px;white-space:pre;">A</div>
<div class="t" style="position:absolute;left:375.60px;top:115.97px;font-size:11.5px;line-height:11.5px;font-weight:400;color:#444;letter-spacing:0.728px;white-space:pre;font-weight:600;-webkit-text-stroke:0.3px #444">A</div>
<div class="t" style="position:absolute;left:442.00px;top:105.44px;font-size:12px;line-height:12px;font-weight:400;color:#a2a2a2;letter-spacing:-0.051px;white-space:pre;">Экспресс-</div>
<div class="t" style="position:absolute;left:451.00px;top:120.54px;font-size:12px;line-height:12px;font-weight:400;color:#a2a2a2;letter-spacing:-0.381px;white-space:pre;">стили</div>
<div class="t" style="position:absolute;left:523.00px;top:70.59px;font-size:12px;line-height:12px;font-weight:400;color:#333;letter-spacing:-0.229px;white-space:pre;">Заливка</div>
<div class="t" style="position:absolute;left:523.00px;top:93.84px;font-size:12px;line-height:12px;font-weight:400;color:#333;letter-spacing:-0.081px;white-space:pre;">Линия</div>
<div class="t" style="position:absolute;left:523.00px;top:116.84px;font-size:12px;line-height:12px;font-weight:400;color:#a2a2a2;letter-spacing:-0.652px;white-space:pre;">Эффекты</div>
<div class="t" style="position:absolute;left:600.50px;top:105.04px;font-size:12px;line-height:12px;font-weight:400;color:#a2a2a2;letter-spacing:-0.248px;white-space:pre;">Выровнять</div>
<div class="t" style="position:absolute;left:665.80px;top:105.04px;font-size:12px;line-height:12px;font-weight:400;color:#333;letter-spacing:0.086px;white-space:pre;">Положение</div>
<div class="t" style="position:absolute;left:778.50px;top:105.04px;font-size:12px;line-height:12px;font-weight:400;color:#a2a2a2;letter-spacing:-0.092px;white-space:pre;">Заменить</div>
<div class="t" style="position:absolute;left:782.60px;top:121.34px;font-size:12px;line-height:12px;font-weight:400;color:#a2a2a2;letter-spacing:-0.077px;white-space:pre;">фигуру</div>
<div class="t" style="position:absolute;left:46.20px;top:414.64px;font-size:12px;line-height:12px;font-weight:400;color:#2f2f2f;letter-spacing:0.151px;white-space:pre;">Прямоугол...</div>
<div class="t" style="position:absolute;left:159.00px;top:414.64px;font-size:12px;line-height:12px;font-weight:400;color:#2f2f2f;letter-spacing:-0.386px;white-space:pre;">Квадрат</div>
<div class="t" style="position:absolute;left:46.00px;top:451.84px;font-size:12px;line-height:12px;font-weight:400;color:#2f2f2f;letter-spacing:-0.190px;white-space:pre;">Эллипс</div>
<div class="t" style="position:absolute;left:159.00px;top:451.84px;font-size:12px;line-height:12px;font-weight:400;color:#2f2f2f;letter-spacing:0.473px;white-space:pre;">Круг</div>
<div class="t" style="position:absolute;left:46.00px;top:489.64px;font-size:12px;line-height:12px;font-weight:400;color:#2f2f2f;letter-spacing:0.288px;white-space:pre;">Треугольник</div>
<div class="t" style="position:absolute;left:159.00px;top:482.64px;font-size:12px;line-height:12px;font-weight:400;color:#2f2f2f;letter-spacing:0.168px;white-space:pre;">Прямоугол...</div>
<div class="t" style="position:absolute;left:159.00px;top:497.14px;font-size:12px;line-height:12px;font-weight:400;color:#2f2f2f;letter-spacing:0.084px;white-space:pre;">треугольник</div>
<div class="t" style="position:absolute;left:46.00px;top:526.84px;font-size:12px;line-height:12px;font-weight:400;color:#2f2f2f;letter-spacing:0.041px;white-space:pre;">Пятиуголь...</div>
<div class="t" style="position:absolute;left:159.00px;top:526.84px;font-size:12px;line-height:12px;font-weight:400;color:#2f2f2f;letter-spacing:-0.034px;white-space:pre;">Шестиугол...</div>
<div class="t" style="position:absolute;left:46.00px;top:572.24px;font-size:12px;line-height:12px;font-weight:400;color:#2f2f2f;letter-spacing:0.043px;white-space:pre;">Семиуголь...</div>
<div class="t" style="position:absolute;left:159.00px;top:572.24px;font-size:12px;line-height:12px;font-weight:400;color:#2f2f2f;letter-spacing:0.052px;white-space:pre;">Восьмиуго...</div>
<div class="t" style="position:absolute;left:46.00px;top:608.84px;font-size:12px;line-height:12px;font-weight:400;color:#2f2f2f;letter-spacing:-0.118px;white-space:pre;">Десятиугол...</div>
<div class="t" style="position:absolute;left:159.00px;top:608.84px;font-size:12px;line-height:12px;font-weight:400;color:#2f2f2f;letter-spacing:-0.085px;white-space:pre;">Цилиндр</div>
<div class="t" style="position:absolute;left:306.00px;top:174.08px;font-size:9px;line-height:9px;font-weight:400;color:#4a4a4a;letter-spacing:0.000px;white-space:pre;">-20</div>
<div class="t" style="position:absolute;left:339.00px;top:174.08px;font-size:9px;line-height:9px;font-weight:400;color:#4a4a4a;letter-spacing:0.000px;white-space:pre;">0</div>
<div class="t" style="position:absolute;left:372.00px;top:174.08px;font-size:9px;line-height:9px;font-weight:400;color:#4a4a4a;letter-spacing:0.000px;white-space:pre;">20</div>
<div class="t" style="position:absolute;left:405.00px;top:174.08px;font-size:9px;line-height:9px;font-weight:400;color:#4a4a4a;letter-spacing:0.000px;white-space:pre;">40</div>
<div class="t" style="position:absolute;left:438.00px;top:174.08px;font-size:9px;line-height:9px;font-weight:400;color:#4a4a4a;letter-spacing:0.000px;white-space:pre;">60</div>
<div class="t" style="position:absolute;left:471.00px;top:174.08px;font-size:9px;line-height:9px;font-weight:400;color:#4a4a4a;letter-spacing:0.000px;white-space:pre;">80</div>
<div class="t" style="position:absolute;left:504.00px;top:174.08px;font-size:9px;line-height:9px;font-weight:400;color:#4a4a4a;letter-spacing:0.000px;white-space:pre;">100</div>
<div class="t" style="position:absolute;left:537.00px;top:174.08px;font-size:9px;line-height:9px;font-weight:400;color:#4a4a4a;letter-spacing:0.000px;white-space:pre;">120</div>
<div class="t" style="position:absolute;left:570.00px;top:174.08px;font-size:9px;line-height:9px;font-weight:400;color:#4a4a4a;letter-spacing:0.000px;white-space:pre;">140</div>
<div class="t" style="position:absolute;left:603.00px;top:174.08px;font-size:9px;line-height:9px;font-weight:400;color:#4a4a4a;letter-spacing:0.000px;white-space:pre;">160</div>
<div class="t" style="position:absolute;left:636.00px;top:174.08px;font-size:9px;line-height:9px;font-weight:400;color:#4a4a4a;letter-spacing:0.000px;white-space:pre;">180</div>
<div class="t" style="position:absolute;left:669.00px;top:174.08px;font-size:9px;line-height:9px;font-weight:400;color:#4a4a4a;letter-spacing:0.000px;white-space:pre;">200</div>
<div class="t" style="position:absolute;left:702.00px;top:174.08px;font-size:9px;line-height:9px;font-weight:400;color:#4a4a4a;letter-spacing:0.000px;white-space:pre;">220</div>
<div class="t" style="position:absolute;left:735.00px;top:174.08px;font-size:9px;line-height:9px;font-weight:400;color:#4a4a4a;letter-spacing:0.000px;white-space:pre;">240</div>
<div class="t" style="position:absolute;left:768.00px;top:174.08px;font-size:9px;line-height:9px;font-weight:400;color:#4a4a4a;letter-spacing:0.000px;white-space:pre;">260</div>
<div class="t" style="position:absolute;left:801.00px;top:174.08px;font-size:9px;line-height:9px;font-weight:400;color:#4a4a4a;letter-spacing:0.000px;white-space:pre;">280</div>
<div class="t" style="position:absolute;left:834.00px;top:174.08px;font-size:9px;line-height:9px;font-weight:400;color:#4a4a4a;letter-spacing:0.000px;white-space:pre;">300</div>
<div class="t" style="position:absolute;left:867.00px;top:174.08px;font-size:9px;line-height:9px;font-weight:400;color:#4a4a4a;letter-spacing:0.000px;white-space:pre;">320</div>
<div class="t" style="position:absolute;left:283.00px;top:174.08px;font-size:9px;line-height:9px;font-weight:400;color:#4a4a4a;letter-spacing:0.000px;white-space:pre;">0</div>
<div class="t" style="position:absolute;left:280.00px;top:609.34px;font-size:12px;line-height:12px;font-weight:700;color:#41609e;letter-spacing:-0.255px;white-space:pre;">Страница-1</div>
<div class="t" style="position:absolute;left:376.00px;top:609.34px;font-size:12px;line-height:12px;font-weight:400;color:#333;letter-spacing:-0.562px;white-space:pre;">Все</div>
</body></html>
